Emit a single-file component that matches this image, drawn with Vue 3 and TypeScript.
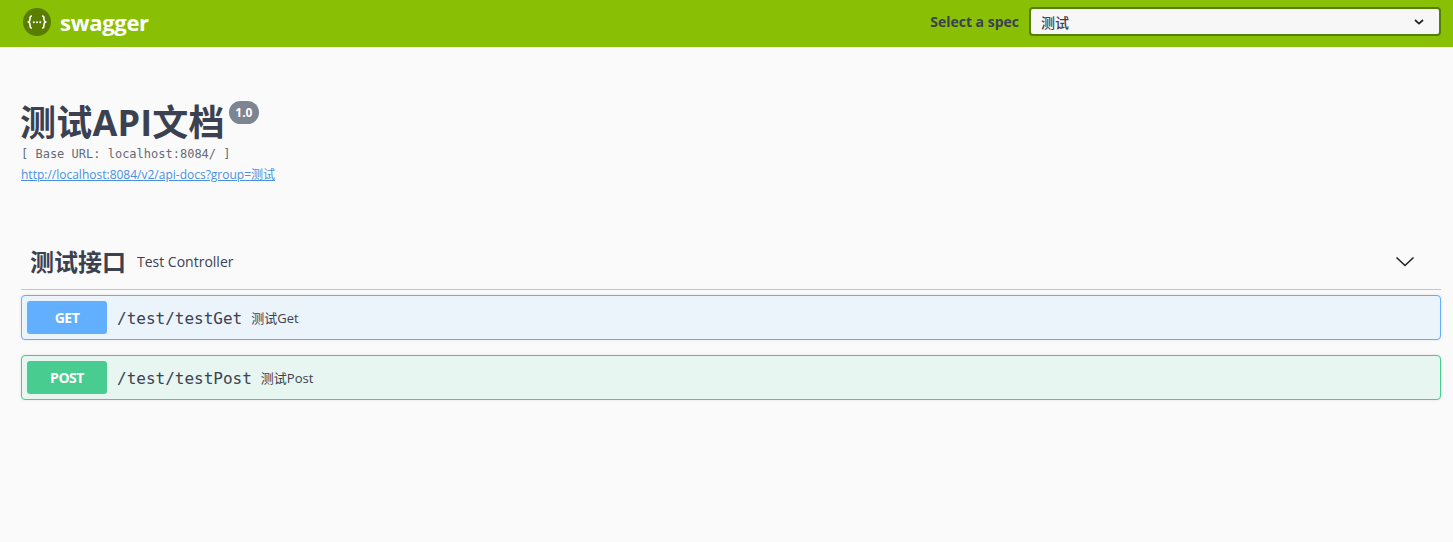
<script setup lang="ts">
interface Operation {
  method: string
  path: string
  summary: string
  kind: string
}

const operations: Operation[] = [
  { method: 'GET', path: '/test/testGet', summary: '测试Get', kind: 'get' },
  { method: 'POST', path: '/test/testPost', summary: '测试Post', kind: 'post' }
]
</script>

<template>
  <div class="page">
    <header class="topbar">
      <div class="brand">
        <svg class="logo" width="30" height="30" viewBox="0 0 30 30">
          <circle cx="15" cy="15" r="14" fill="#5a7d00" />
          <path
            d="M10 9c-2 0-1.9 1.2-1.9 2.8 0 1.9-.3 2.6-1.5 3.2 1.2.6 1.5 1.3 1.5 3.2 0 1.6-.1 2.8 1.9 2.8M20 9c2 0 1.9 1.2 1.9 2.8 0 1.9.3 2.6 1.5 3.2-1.2.6-1.5 1.3-1.5 3.2 0 1.6.1 2.8-1.9 2.8"
            fill="none"
            stroke="#fff"
            stroke-width="1.6"
          />
          <circle cx="11.8" cy="15.2" r="1" fill="#fff" />
          <circle cx="15" cy="15.2" r="1" fill="#fff" />
          <circle cx="18.2" cy="15.2" r="1" fill="#fff" />
        </svg>
        <span class="brand-name">swagger</span>
      </div>
      <div class="spec">
        <span class="spec-label">Select a spec</span>
        <div class="spec-select">
          <span>测试</span>
          <svg width="10" height="6" viewBox="0 0 10 6">
            <path d="M1 1l4 3.6L9 1" fill="none" stroke="#222" stroke-width="1.7" />
          </svg>
        </div>
      </div>
    </header>

    <main class="content">
      <section class="info">
        <div class="title-row">
          <h2 class="title">测试API文档</h2>
          <span class="version">1.0</span>
        </div>
        <pre class="base-url">[ Base URL: localhost:8084/ ]</pre>
        <a class="spec-link" href="#">http://localhost:8084/v2/api-docs?group=测试</a>
      </section>

      <section class="tag-section">
        <div class="tag">
          <h4 class="tag-name">测试接口</h4>
          <span class="tag-desc">Test Controller</span>
          <svg class="tag-arrow" width="20" height="20" viewBox="0 0 20 20">
            <path d="M1.5 5.5 10 13.5l8.5-8" fill="none" stroke="#222" stroke-width="1.6" />
          </svg>
        </div>
        <div
          v-for="op in operations"
          :key="op.path"
          :class="['opblock', op.kind]"
        >
          <span class="method">{{ op.method }}</span>
          <span class="path">{{ op.path }}</span>
          <span class="summary">{{ op.summary }}</span>
        </div>
      </section>
    </main>
  </div>
</template>

<style>
html,
body {
  margin: 0;
  background: #fafafa;
}
</style>

<style scoped>
.page {
  min-height: 542px;
  background: #fafafa;
  font-family: "Open Sans", "Noto Sans CJK SC", sans-serif;
  color: #3b4151;
}

.topbar {
  height: 47px;
  box-sizing: border-box;
  padding: 0 12px 4px 22px;
  background: #89bf04;
  display: flex;
  align-items: center;
  justify-content: space-between;
}

.brand {
  display: flex;
  align-items: center;
  gap: 8px;
}

.logo {
  display: block;
}

.brand-name {
  font-size: 22px;
  line-height: 30px;
  font-weight: 700;
  color: #fff;
  letter-spacing: -0.3px;
}

.spec {
  display: flex;
  align-items: center;
  gap: 10px;
}

.spec-label {
  font-size: 14px;
  font-weight: 700;
  color: #3b4151;
}

.spec-select {
  width: 412px;
  height: 29px;
  box-sizing: border-box;
  padding: 0 15px 0 10px;
  border: 2px solid #547f00;
  border-radius: 4px;
  background: #f7f7f7;
  display: flex;
  align-items: center;
  justify-content: space-between;
  font-size: 14px;
  font-weight: 500;
}

.content {
  padding: 0 12px 0 21px;
}

.info {
  padding-top: 53px;
}

.title-row {
  display: flex;
  align-items: flex-start;
  height: 47px;
}

.title {
  margin: 0 0 0 -1px;
  font-size: 36px;
  line-height: 45px;
  font-weight: 700;
  letter-spacing: 0.2px;
}

.version {
  margin: 1px 0 0 4px;
  height: 23px;
  padding: 0 6.5px;
  border-radius: 12px;
  background: #7d8492;
  color: #fff;
  font-size: 12px;
  line-height: 24px;
  font-weight: 700;
}

.base-url {
  margin: 0;
  font-family: "DejaVu Sans Mono", monospace;
  font-size: 12px;
  line-height: 14px;
  color: #666b78;
}

.spec-link {
  display: block;
  margin-top: 6px;
  font-size: 12px;
  line-height: 16px;
  color: #4990e2;
}

.tag-section {
  margin-top: 49px;
}

.tag {
  height: 58px;
  box-sizing: border-box;
  padding: 0 26px 0 9px;
  border-bottom: 1px solid #c4c4c4;
  display: flex;
  align-items: center;
}

.tag-name {
  margin: -1px 0 0;
  font-size: 24px;
  font-weight: 700;
}

.tag-desc {
  margin: 2px 0 0 11px;
  font-size: 14px;
}

.tag-arrow {
  margin: 2px 0 0 auto;
}

.opblock {
  height: 45px;
  box-sizing: border-box;
  margin-top: 5px;
  margin-bottom: 15px;
  padding: 0 5px;
  border: 1px solid;
  border-radius: 4px;
  display: flex;
  align-items: center;
  box-shadow: 0 0 3px rgba(0, 0, 0, 0.1);
}

.opblock + .opblock {
  margin-top: 0;
}

.opblock.get {
  background: #ebf3fb;
  border-color: #61affe;
}

.opblock.post {
  background: #e7f6f0;
  border-color: #49cc90;
}

.method {
  width: 80px;
  height: 33px;
  border-radius: 3px;
  color: #fff;
  font-size: 14px;
  font-weight: 700;
  line-height: 33px;
  text-align: center;
  letter-spacing: -0.5px;
}

.get .method {
  background: #61affe;
}

.post .method {
  background: #49cc90;
}

.path {
  margin: 1px 0 0 10px;
  font-family: "DejaVu Sans Mono", monospace;
  font-size: 16px;
}

.summary {
  margin: 0 0 0 9px;
  font-size: 13px;
}
</style>
